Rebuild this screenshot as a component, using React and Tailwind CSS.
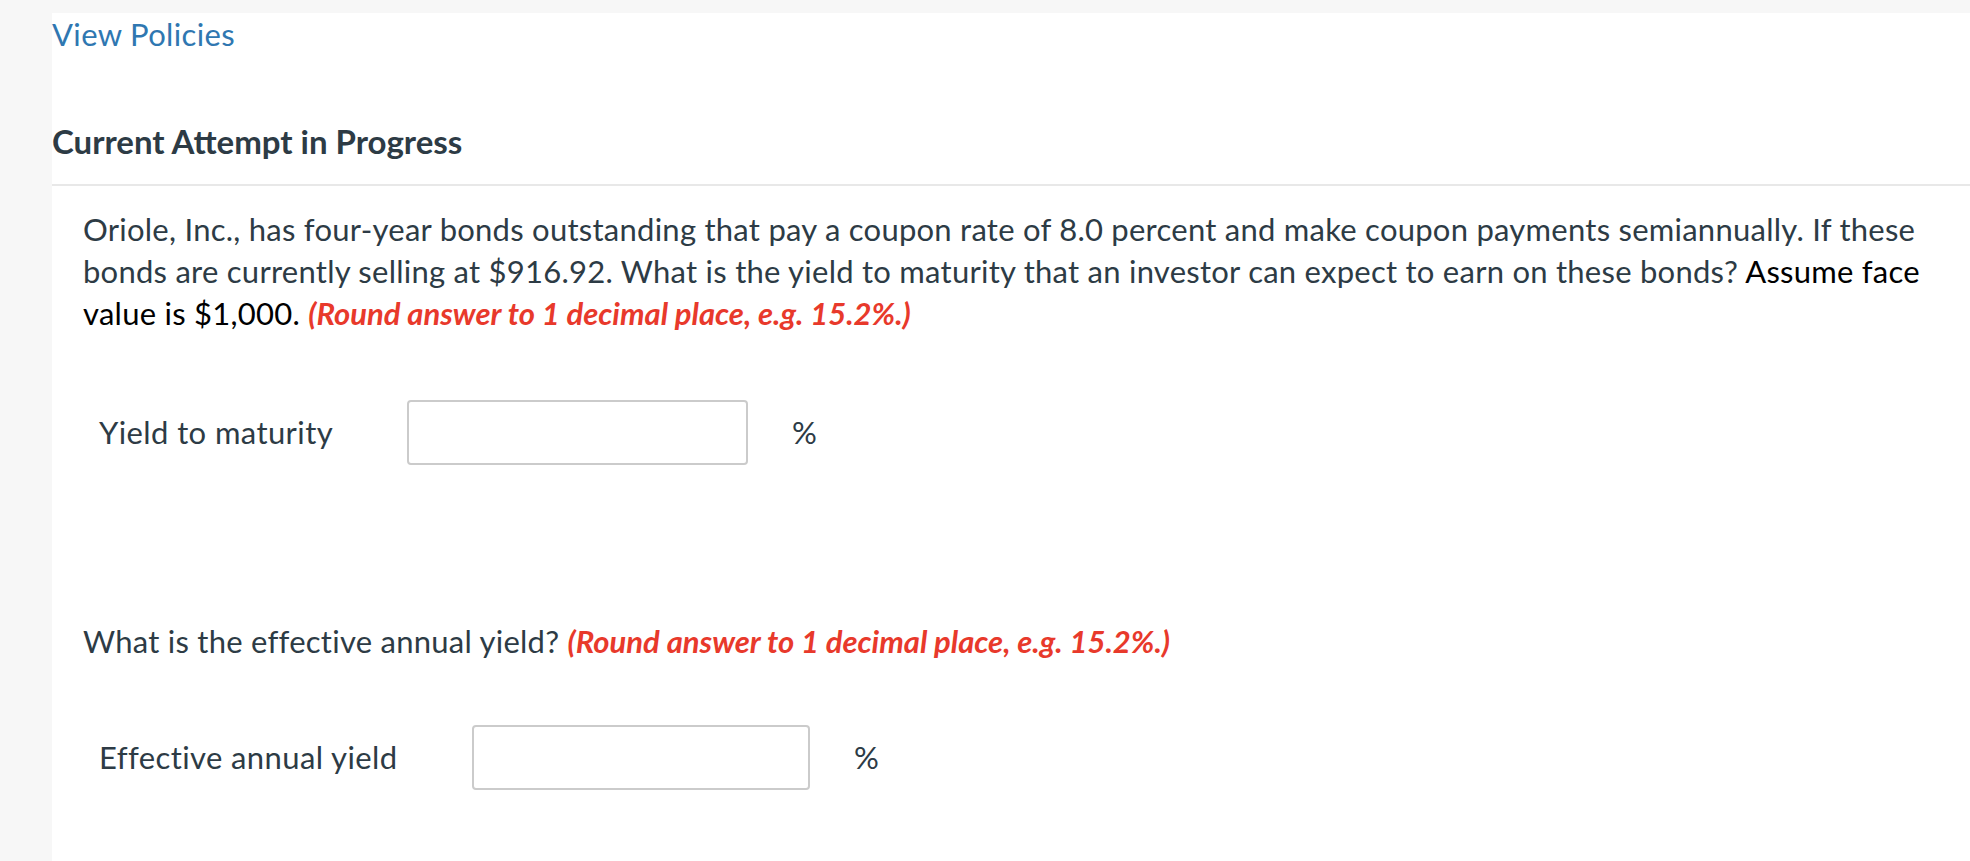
import React from "react";

const font = { fontFamily: "Lato, 'Open Sans', sans-serif" };

export default function App() {
  return (
    <div className="min-h-[861px] bg-[#f7f7f7] pt-[13px] pl-[52px]" style={font}>
      <div className="min-h-[848px] bg-white text-[#2d3b45] text-[31px] leading-[43px] tracking-[0.25px]">
        <div>
          <a href="#" className="text-[#2f77b1] tracking-[0.35px]">View Policies</a>
        </div>
        <h2 className="mt-[64px] font-bold text-[33px] leading-[43px] tracking-normal text-[#2d3b45]">Current Attempt in Progress</h2>
        <div className="mt-[21px] h-[2px] bg-[#e8e8e8]" />
        <div className="pl-[31px] pr-[28px]">
          <p className="mt-[22px] leading-[42px]">
            Oriole, Inc., has four-year bonds outstanding that pay a coupon rate of 8.0 percent and make coupon payments semiannually. If these bonds are currently selling at $916.92. What is the yield to maturity that an investor can expect to earn on these bonds?{" "}
            <span className="text-black">Assume face value is $1,000.</span>{" "}
            <span className="font-bold italic tracking-normal text-[#e8392b]">(Round answer to 1 decimal place, e.g. 15.2%.)</span>
          </p>
          <div className="mt-[66px] flex items-center pl-[16px]">
            <span className="w-[308px] shrink-0 tracking-[0.4px]">Yield to maturity</span>
            <div className="h-[65px] w-[341px] rounded-[4px] border-2 border-[#cbcbcb] bg-white" />
            <span className="ml-[44px]">%</span>
          </div>
          <p className="mt-[155px] leading-[43px]">
            What is the effective annual yield?{" "}
            <span className="font-bold italic tracking-normal text-[#e8392b]">(Round answer to 1 decimal place, e.g. 15.2%.)</span>
          </p>
          <div className="mt-[62px] flex items-center pl-[16px]">
            <span className="w-[373px] shrink-0 tracking-[0.4px]">Effective annual yield</span>
            <div className="h-[65px] w-[338px] rounded-[4px] border-2 border-[#cbcbcb] bg-white" />
            <span className="ml-[44px]">%</span>
          </div>
        </div>
      </div>
    </div>
  );
}
